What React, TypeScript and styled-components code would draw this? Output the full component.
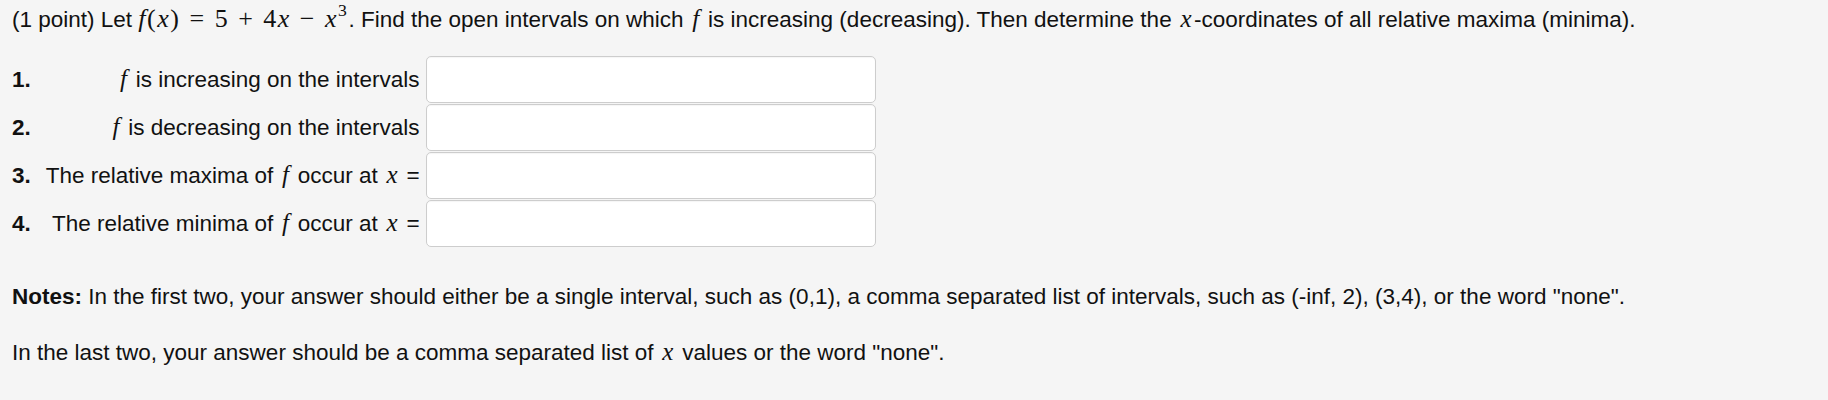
import { Fragment } from "react";
import { createGlobalStyle, styled } from "styled-components";

const GlobalStyle = createGlobalStyle`
  html, body {
    margin: 0;
    padding: 0;
    background: #f5f5f5;
  }
  body {
    font-family: "Liberation Sans", Arial, Helvetica, sans-serif;
    font-size: 22.5px;
    color: #111;
  }
`;

const Page = styled.div`
  padding: 6px 12px 20px 12px;
`;

const Paragraph = styled.p<{ $gap?: number }>`
  margin: 0 0 ${(p) => p.$gap ?? 0}px 0;
  line-height: 26px;
`;

const Math = styled.span`
  font-family: "Liberation Serif", "Times New Roman", serif;
  font-size: 26px;
  line-height: 1;
  letter-spacing: 1.5px;
  white-space: nowrap;
`;

const Var = styled.i`
  font-family: "Liberation Serif", "Times New Roman", serif;
  font-style: italic;
  font-size: 25px;
  line-height: 1;
  padding: 0 2.5px;
`;

const Op = styled.span`
  padding: 0 9px;
`;

const Sup = styled.sup`
  font-size: 0.68em;
  vertical-align: 0.6em;
  line-height: 0;
`;

const Answers = styled.div`
  display: grid;
  grid-template-columns: auto auto 450px;
  justify-content: start;
  grid-auto-rows: 47px;
  row-gap: 1px;
  align-items: center;
  margin: 0 0 37px 0;
`;

const Num = styled.span`
  font-weight: bold;
  padding-right: 15px;
`;

const Label = styled.span`
  justify-self: end;
  padding-right: 6px;
  white-space: nowrap;
`;

const AnswerInput = styled.input`
  box-sizing: border-box;
  width: 450px;
  height: 47px;
  background: #fff;
  border: 1px solid #cdcdcd;
  border-radius: 5px;
  box-shadow: inset 0 1px 1px rgba(0, 0, 0, 0.04);
  font: inherit;
  padding: 0 10px;
  outline: none;
`;

const Strong = styled.b`
  font-weight: bold;
`;

const fx = (
  <Math>
    <i>f</i>(<i>x</i>)<Op>=</Op>5<Op>+</Op>4<i>x</i>
    <Op>−</Op>
    <i>x</i>
    <Sup>3</Sup>
  </Math>
);

const rows: { n: string; label: React.ReactNode }[] = [
  {
    n: "1.",
    label: (
      <>
        <Var>f</Var> is increasing on the intervals
      </>
    ),
  },
  {
    n: "2.",
    label: (
      <>
        <Var>f</Var> is decreasing on the intervals
      </>
    ),
  },
  {
    n: "3.",
    label: (
      <>
        The relative maxima of <Var>f</Var> occur at <Var>x</Var> =
      </>
    ),
  },
  {
    n: "4.",
    label: (
      <>
        The relative minima of <Var>f</Var> occur at <Var>x</Var> =
      </>
    ),
  },
];

export default function App() {
  return (
    <>
      <GlobalStyle />
      <Page>
        <Paragraph $gap={23}>
          (1 point) Let {fx}. Find the open intervals on which <Var>f</Var> is
          increasing (decreasing). Then determine the <Var>x</Var>-coordinates
          of all relative maxima (minima).
        </Paragraph>
        <Answers>
          {rows.map((r) => (
            <Fragment key={r.n}>
              <Num>{r.n}</Num>
              <Label>{r.label}</Label>
              <AnswerInput type="text" />
            </Fragment>
          ))}
        </Answers>
        <Paragraph $gap={29}>
          <Strong>Notes:</Strong> In the first two, your answer should either be
          a single interval, such as (0,1), a comma separated list of intervals,
          such as (-inf, 2), (3,4), or the word "none".
        </Paragraph>
        <Paragraph>
          In the last two, your answer should be a comma separated list of{" "}
          <Var>x</Var> values or the word "none".
        </Paragraph>
      </Page>
    </>
  );
}
